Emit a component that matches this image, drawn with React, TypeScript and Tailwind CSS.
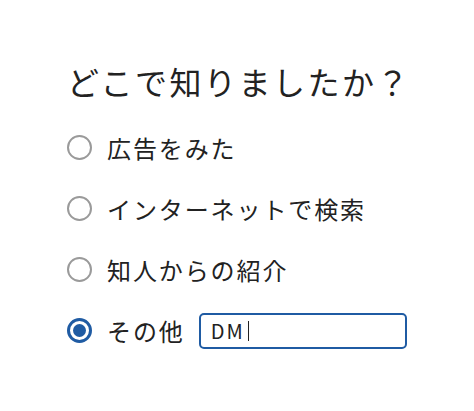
import React from "react";

const font = { fontFamily: '"Noto Sans CJK JP", "Noto Sans", sans-serif' };

function Radio({ checked }: { checked?: boolean }) {
  if (checked) {
    return (
      <span className="flex h-[25px] w-[25px] shrink-0 items-center justify-center rounded-full border-[3px] border-[#1f5ba3] bg-white">
        <span className="h-[13px] w-[13px] rounded-full bg-[#1f5ba3]" />
      </span>
    );
  }
  return <span className="h-[25px] w-[25px] shrink-0 rounded-full border-2 border-[#9a9a9a] bg-white" />;
}

function Row({ label, checked, children }: { label: string; checked?: boolean; children?: React.ReactNode }) {
  return (
    <div className="flex h-[61px] items-center">
      <Radio checked={checked} />
      <span className="ml-[15px] text-[24px] leading-none tracking-[1.9px] text-[#222222]">{label}</span>
      {children}
    </div>
  );
}

export default function App() {
  return (
    <div className="h-[411px] w-[474px] bg-white pl-[67px] pt-[61px]" style={font}>
      <h1 className="text-[32px] font-normal leading-[40px] tracking-[2.5px] text-[#222222]">どこで知りましたか？</h1>
      <div className="mt-[16px] flex flex-col">
        <Row label="広告をみた" />
        <Row label="インターネットで検索" />
        <Row label="知人からの紹介" />
        <Row label="その他" checked>
          <div className="ml-[14px] flex h-[36px] w-[208px] items-center rounded-[5px] border-2 border-[#1f5ba3] bg-white pl-[10px]">
            <span className="text-[20px] leading-none tracking-[2px] text-[#222222]">DM</span>
            <span className="ml-[3px] h-[20px] w-[1.5px] bg-[#222222]" />
          </div>
        </Row>
      </div>
    </div>
  );
}
